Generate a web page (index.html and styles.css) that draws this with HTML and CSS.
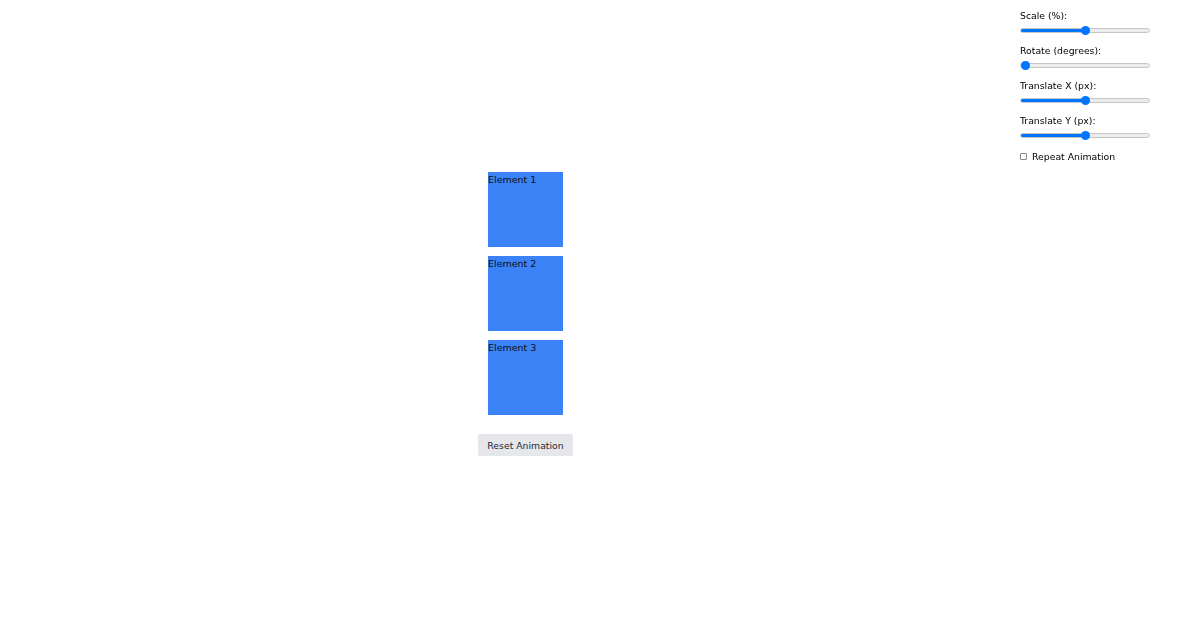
FILE: index.html
```html
<!DOCTYPE html>
<html>
<head>
<meta charset="utf-8">
<link rel="stylesheet" href="styles.css">
</head>
<body>
<main class="stage">
  <div class="element">Element 1</div>
  <div class="element">Element 2</div>
  <div class="element">Element 3</div>
  <button class="reset">Reset Animation</button>
</main>
<aside class="controls">
  <div class="group">
    <label class="label">Scale (%):</label>
    <input class="slider" type="range" min="50" max="150" value="100" style="--p:50%">
  </div>
  <div class="group">
    <label class="label">Rotate (degrees):</label>
    <input class="slider" type="range" min="0" max="360" value="0" style="--p:0%">
  </div>
  <div class="group">
    <label class="label">Translate X (px):</label>
    <input class="slider" type="range" min="-100" max="100" value="0" style="--p:50%">
  </div>
  <div class="group">
    <label class="label">Translate Y (px):</label>
    <input class="slider" type="range" min="-100" max="100" value="0" style="--p:50%">
  </div>
  <label class="check-row"><input class="check" type="checkbox"><span>Repeat Animation</span></label>
</aside>
</body>
</html>
```
FILE: styles.css
```css
* { box-sizing: border-box; }
html, body { margin: 0; padding: 0; background: #fff; }
body {
  font-family: "DejaVu Sans", sans-serif;
  font-size: 9.3px;
  color: #000;
  width: 1200px;
  height: 630px;
  overflow: hidden;
}
.stage {
  height: 630px;
  padding-right: 149px;
  padding-bottom: 2px;
  display: flex;
  flex-direction: column;
  align-items: center;
  justify-content: center;
}
.element {
  width: 75px;
  height: 75px;
  background: #3b82f6;
  color: #0b1020;
  font-size: 9.5px;
  line-height: 16px;
  margin-bottom: 9px;
}
.element:last-of-type { margin-bottom: 0; }
.reset {
  margin-top: 19px;
  width: 95px;
  height: 22px;
  border: none;
  border-radius: 2px;
  background: #e5e7eb;
  color: #1f2937;
  font-family: "DejaVu Sans", sans-serif;
  font-size: 9.3px;
  padding: 0;
}
.controls {
  position: fixed;
  top: 10px;
  left: 1020px;
  width: 130px;
}
.group { margin-bottom: 10px; }
.label { display: block; line-height: 12px; margin-bottom: 3px; }
.slider {
  -webkit-appearance: none;
  appearance: none;
  display: block;
  width: 130px;
  height: 10px;
  margin: 0;
  background: transparent;
}
.slider::-webkit-slider-runnable-track {
  height: 5px;
  border-radius: 3px;
  border: 1px solid #c6c6c6;
  background: linear-gradient(to right, #0075ff var(--p), #ececec var(--p));
}
.slider::-webkit-slider-thumb {
  -webkit-appearance: none;
  width: 9px;
  height: 9px;
  border-radius: 50%;
  background: #0075ff;
  margin-top: -3px;
  border: none;
}
.check-row {
  display: flex;
  align-items: center;
  height: 13px;
  line-height: 13px;
}
.check {
  -webkit-appearance: none;
  appearance: none;
  width: 7px;
  height: 7px;
  margin: 0 5px 0 0;
  border: 1px solid #8a8a8a;
  border-radius: 1px;
  background: #fff;
}
```
